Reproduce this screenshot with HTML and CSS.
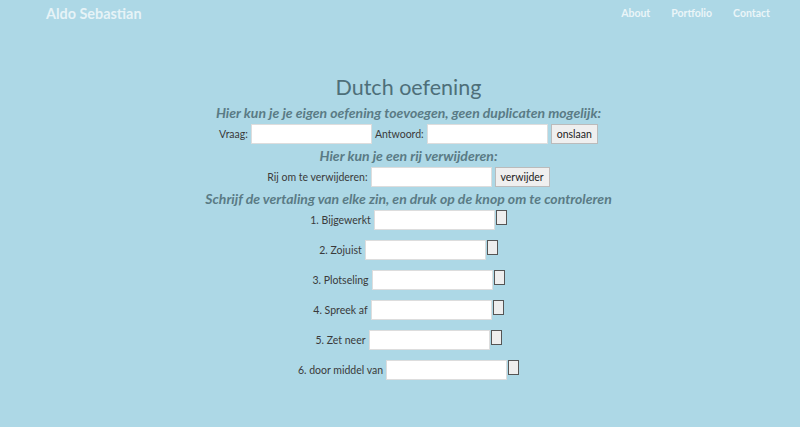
FILE: index.html
```html
<!DOCTYPE html>
<html lang="nl">
<head>
<meta charset="utf-8">
<title>Dutch oefening</title>
<link rel="stylesheet" href="styles.css">
</head>
<body>
<header class="nav">
  <a class="brand" href="#">Aldo Sebastian</a>
  <nav class="links">
    <a href="#">About</a>
    <a href="#">Portfolio</a>
    <a href="#">Contact</a>
  </nav>
</header>
<main class="main">
  <h1 class="title">Dutch oefening</h1>
  <h2 class="sub">Hier kun je je eigen oefening toevoegen, geen duplicaten mogelijk:</h2>
  <div class="row">
    <label>Vraag:</label><input type="text"><label>Antwoord:</label><input type="text"><button class="btn">onslaan</button>
  </div>
  <h2 class="sub">Hier kun je een rij verwijderen:</h2>
  <div class="row">
    <label>Rij om te verwijderen:</label><input type="text"><button class="btn">verwijder</button>
  </div>
  <h2 class="sub">Schrijf de vertaling van elke zin, en druk op de knop om te controleren</h2>
  <div class="q"><label>1. Bijgewerkt</label><input type="text"><button class="chk"></button></div>
  <div class="q"><label>2. Zojuist</label><input type="text"><button class="chk"></button></div>
  <div class="q"><label>3. Plotseling</label><input type="text"><button class="chk"></button></div>
  <div class="q"><label>4. Spreek af</label><input type="text"><button class="chk"></button></div>
  <div class="q"><label>5. Zet neer</label><input type="text"><button class="chk"></button></div>
  <div class="q"><label>6. door middel van</label><input type="text"><button class="chk"></button></div>
</main>
</body>
</html>
```
FILE: styles.css
```css
* { box-sizing: border-box; }
body {
  margin: 0;
  background: #add8e6;
  font-family: Lato, "Open Sans", sans-serif;
  color: #333;
}
.nav {
  display: flex;
  justify-content: space-between;
  align-items: center;
  height: 26px;
  padding: 0 30px 0 46px;
}
.brand {
  color: #e6f3f7;
  font-weight: 700;
  font-size: 14.4px;
  text-decoration: none;
}
.links { display: flex; gap: 21px; }
.links a {
  color: #eaf5f8;
  font-weight: 700;
  font-size: 10.5px;
  text-decoration: none;
}
.main {
  display: flex;
  flex-direction: column;
  align-items: center;
  padding-top: 46px;
  padding-left: 17px;
}
.title {
  margin: 0;
  font-size: 21.5px;
  font-weight: 400;
  color: #4e6f79;
  line-height: 30px;
}
.sub {
  margin: 0;
  font-size: 14px;
  font-style: italic;
  font-weight: 700;
  color: #5a7b85;
  line-height: 21px;
}
.row, .q {
  display: flex;
  align-items: center;
  font-size: 10.5px;
  color: #3a3a3a;
  height: 22px;
}
.row label, .q label { margin-right: 3px; }
input {
  width: 121px;
  height: 20px;
  border: 1px solid #ddd;
  background: #fff;
  margin: 0 3px 0 0;
  padding: 0 2px;
}
.btn {
  height: 20px;
  padding: 0 5px;
  border: 1px solid #bbb;
  background: #efefef;
  font-family: inherit;
  font-size: 10.5px;
  color: #222;
  margin: 0;
}
.q { margin-bottom: 8px; }
.q input { margin-right: 1px; }
.chk {
  width: 11px;
  height: 15px;
  border: 1px solid #555;
  background: #eee;
  padding: 0;
  margin: 0;
  align-self: flex-start;
  margin-top: 1px;
}
```
